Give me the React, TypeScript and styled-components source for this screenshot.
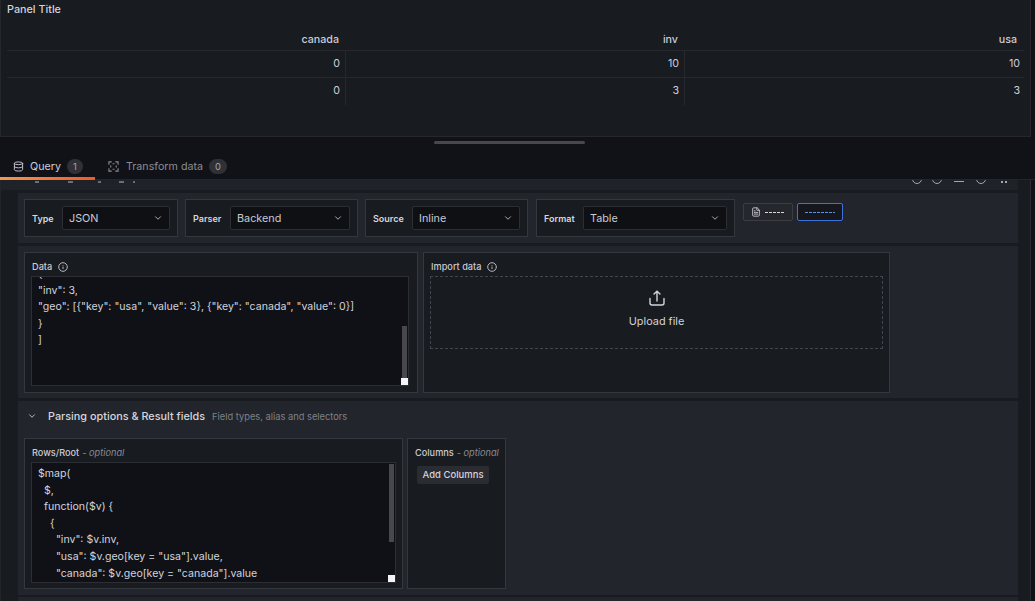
import React from 'react';
import styled, { createGlobalStyle } from 'styled-components';
import { ChevronDown, Database, FileText } from 'lucide-react';

const GlobalStyle = createGlobalStyle`
  html, body {
    margin: 0;
    height: 100%;
    background: #111217;
  }
  body {
    font-family: Inter, "Liberation Sans", sans-serif;
    color: #ccccdc;
    overflow: hidden;
  }
  * { box-sizing: border-box; }
`;

const Page = styled.div`
  width: 1035px;
  height: 601px;
  overflow: hidden;
  background: #111217;
`;

const PanelWrap = styled.div`
  width: 1031px;
  height: 137px;
  background: #181b1f;
  border: 1px solid #25272d;
  border-top: 0;
  padding: 0 6px;
`;

const PanelTitle = styled.div`
  height: 20px;
  line-height: 20px;
  font-size: 10.8px;
  font-weight: 500;
  color: #d2d3dd;
`;

const Row = styled.div<{ $head?: boolean }>`
  display: grid;
  grid-template-columns: 339px 339px 339px;
  height: ${({ $head }) => ($head ? '31px' : '27px')};
  padding-top: ${({ $head }) => ($head ? '11px' : '0')};
  border-bottom: 1px solid #26282e;
  width: 1017px;
`;

const LastRow = styled(Row)`
  border-bottom: 0;
`;

const Cell = styled.div<{ $head?: boolean; $last?: boolean }>`
  text-align: right;
  font-size: 10.7px;
  font-weight: ${({ $head }) => ($head ? 500 : 400)};
  line-height: ${({ $head }) => ($head ? '18px' : '26px')};
  padding-right: ${({ $head, $last }) => ($head ? '7px' : $last ? '4px' : '5px')};
  border-right: ${({ $head, $last }) => ($head || $last ? '0' : '1px solid #26282e')};
  color: #ccccdc;
`;

const TabBar = styled.div`
  height: 43px;
  position: relative;
  display: flex;
  align-items: flex-end;
  border-bottom: 1px solid #22252a;
`;

const Handle = styled.div`
  position: absolute;
  left: 434px;
  top: 4px;
  width: 151px;
  height: 3px;
  border-radius: 2px;
  background: #46484e;
`;

const Tab = styled.div<{ $active?: boolean; $width: number }>`
  width: ${({ $width }) => $width}px;
  height: 29px;
  padding: 3px 0 0 13px;
  display: flex;
  align-items: center;
  gap: 6px;
  font-size: 10.7px;
  color: ${({ $active }) => ($active ? '#ccccdc' : '#8a8c94')};
  position: relative;
  &::after {
    content: ${({ $active }) => ($active ? "''" : 'none')};
    position: absolute;
    left: 0;
    right: 0;
    bottom: -1px;
    height: 3px;
    background: linear-gradient(90deg, #f2994a, #f05a28);
  }
`;

const TabIcon = styled.svg`
  width: 11px;
  height: 11px;
  margin-right: 1px;
  flex: none;
`;

const Count = styled.span<{ $width: number }>`
  width: ${({ $width }) => $width}px;
  height: 15px;
  border-radius: 8px;
  background: #2f3137;
  font-size: 9.4px;
  line-height: 15px;
  text-align: center;
  color: #a3a5ad;
`;

const Editor = styled.div`
  width: 1031px;
  height: 421px;
  background: #181b1f;
  border-left: 1px solid #22252a;
  border-right: 1px solid #2a2d33;
  padding-left: 17px;
  position: relative;
`;

const ClipHeader = styled.div`
  height: 10px;
  margin-left: -17px;
  width: 1017px;
  background: #1f2228;
  position: relative;
  overflow: hidden;
`;

// only the feet of the scrolled away heading still show below the tab bar
const ClipMark = styled.span<{ $left: number; $width: number }>`
  position: absolute;
  left: ${({ $left }) => $left}px;
  top: 1px;
  width: ${({ $width }) => $width}px;
  height: 2px;
  background: #6d6f77;
`;

const ClipIcons = styled.div`
  position: absolute;
  left: 911px;
  top: -6px;
  display: flex;
  gap: 12px;
`;

const ClipIcon = styled.span`
  width: 10px;
  height: 10px;
  border: 1px solid #a4a6ae;
  border-radius: 50%;
  &:first-child {
    margin-right: -2px;
  }
  &:nth-child(3) {
    height: 8px;
    border: 0;
    border-bottom: 1px solid #a4a6ae;
    border-radius: 0;
  }
`;

const ClipDots = styled.span`
  width: 6px;
  height: 9px;
  margin-left: 3px;
  border-left: 2px dotted #a4a6ae;
  border-right: 2px dotted #a4a6ae;
`;

const Section = styled.div<{ $height: number }>`
  width: 1000px;
  height: ${({ $height }) => $height}px;
  background: #22252b;
  margin-top: 3px;
  padding: 6px;
`;

const Toolbar = styled.div`
  display: flex;
  align-items: flex-start;
`;

const Field = styled.div<{ $width: number; $mr: number }>`
  width: ${({ $width }) => $width}px;
  margin-right: ${({ $mr }) => $mr}px;
  height: 38px;
  flex: none;
  background: #181b1f;
  border: 1px solid #34373d;
  display: flex;
  align-items: center;
  justify-content: space-between;
  padding: 0 7px;
  font-size: 9px;
  font-weight: 600;
  color: #d5d6de;
`;

const Select = styled.div<{ $width: number }>`
  width: ${({ $width }) => $width}px;
  height: 24px;
  background: #0f1014;
  border: 1px solid #2c2e34;
  border-radius: 2px;
  display: flex;
  align-items: center;
  justify-content: space-between;
  padding: 0 6px;
  font-size: 10.8px;
  font-weight: 400;
  color: #c9cad4;
`;

const SmallButton = styled.div<{ $width: number; $blue?: boolean }>`
  width: ${({ $width }) => $width}px;
  height: 18px;
  margin: 4px 4px 0 0;
  flex: none;
  border-radius: 2px;
  border: 1px solid ${({ $blue }) => ($blue ? '#3d71d9' : '#3a3d43')};
  background: ${({ $blue }) => ($blue ? '#15171c' : '#25272d')};
  display: flex;
  align-items: center;
  justify-content: center;
  gap: 4px;
  color: #d5d6de;
`;

// the caption of these two buttons is squashed to an unreadable dotted line
const Squashed = styled.span<{ $width: number; $color: string }>`
  width: ${({ $width }) => $width}px;
  height: 1px;
  background: repeating-linear-gradient(
    90deg,
    ${({ $color }) => $color} 0 3px,
    transparent 3px 4px
  );
`;

const Boxes = styled.div`
  display: flex;
  align-items: flex-start;
`;

const Box = styled.div<{ $width: number; $height: number; $mr: number }>`
  width: ${({ $width }) => $width}px;
  height: ${({ $height }) => $height}px;
  margin-right: ${({ $mr }) => $mr}px;
  flex: none;
  background: #181b1f;
  border: 1px solid #34373d;
  padding: 0 6px;
`;

const BoxLabel = styled.div`
  height: 23px;
  padding: 4px 0 0 1px;
  line-height: 14px;
  display: flex;
  align-items: center;
  gap: 6px;
  font-size: 9.2px;
  font-weight: 500;
  white-space: nowrap;
  color: #c9cad4;
`;

const Optional = styled.em`
  font-weight: 400;
  color: #8a8c94;
  margin-left: -3px;
`;

const InfoIcon = styled.svg`
  width: 10px;
  height: 10px;
`;

const CodeArea = styled.div<{ $width: number; $height: number }>`
  width: ${({ $width }) => $width}px;
  height: ${({ $height }) => $height}px;
  background: #101116;
  border: 1px solid #2c2e34;
  position: relative;
  overflow: hidden;
  padding: 0 6px;
  font-size: 10.6px;
  line-height: 16.6px;
  color: #d2d3dc;
  white-space: pre;
`;

const CodeLines = styled.div<{ $top: number }>`
  margin-top: ${({ $top }) => $top}px;
`;

const Thumb = styled.div<{ $top: number; $height: number }>`
  position: absolute;
  right: 1px;
  top: ${({ $top }) => $top}px;
  width: 5px;
  height: ${({ $height }) => $height}px;
  background: #46484e;
`;

const Resizer = styled.div`
  position: absolute;
  right: 0;
  bottom: 0;
  width: 7px;
  height: 7px;
  background: #f4f4f6;
`;

const DropZone = styled.div`
  height: 73px;
  border: 1px dashed #42454c;
  display: flex;
  flex-direction: column;
  align-items: center;
  padding-top: 13px;
  gap: 8px;
  font-size: 10.9px;
  color: #d2d3dc;
`;

const UploadIcon = styled.svg`
  width: 16px;
  height: 16px;
`;

const CollapseRow = styled.div`
  height: 31px;
  padding: 0 0 13px 3px;
  display: flex;
  align-items: center;
  font-size: 10.85px;
  font-weight: 500;
  color: #d5d6de;
`;

const CollapseTitle = styled.span`
  margin-left: 11px;
`;

const CollapseHint = styled.span`
  margin-left: 7px;
  font-size: 9.3px;
  font-weight: 400;
  color: #7e8189;
`;

const AddButton = styled.div`
  width: 72px;
  height: 18px;
  margin: 4px 0 0 3px;
  background: #2a2c32;
  border-radius: 2px;
  font-size: 9.5px;
  font-weight: 500;
  line-height: 18px;
  text-align: center;
  color: #d2d3dc;
`;

const BottomStrip = styled.div`
  width: 1000px;
  height: 4px;
  margin-top: 2px;
  background: #22252b;
`;

const info = (
  <InfoIcon viewBox="0 0 10 10" fill="none" stroke="currentColor" strokeWidth="0.9">
    <circle cx="5" cy="5" r="4.3" />
    <path d="M5 4.6v2.4M5 3v.7" />
  </InfoIcon>
);

const rows = [
  ['canada', 'inv', 'usa'],
  ['0', '10', '10'],
  ['0', '3', '3'],
];

export default function App() {
  return (
    <Page>
      <GlobalStyle />
      <PanelWrap>
        <PanelTitle>Panel Title</PanelTitle>
        <Row $head>
          {rows[0].map((c, i) => (
            <Cell key={c} $head $last={i === 2}>{c}</Cell>
          ))}
        </Row>
        <Row>
          {rows[1].map((c, i) => (
            <Cell key={i} $last={i === 2}>{c}</Cell>
          ))}
        </Row>
        <LastRow>
          {rows[2].map((c, i) => (
            <Cell key={i} $last={i === 2}>{c}</Cell>
          ))}
        </LastRow>
      </PanelWrap>

      <TabBar>
        <Handle />
        <Tab $active $width={95}>
          <Database size={11} />
          Query
          <Count $width={16}>1</Count>
        </Tab>
        <Tab $width={140}>
          <TabIcon viewBox="0 0 12 12" fill="none" stroke="currentColor" strokeWidth="1.2">
            <path d="M1 4V1h3M8 1h3v3M11 8v3H8M4 11H1V8M5 3h2M9 5v2M7 9H5M3 7V5" />
          </TabIcon>
          Transform data
          <Count $width={18}>0</Count>
        </Tab>
      </TabBar>

      <Editor>
        <ClipHeader>
          <ClipMark $left={34} $width={4} />
          <ClipMark $left={67} $width={5} />
          <ClipMark $left={97} $width={3} />
          <ClipMark $left={118} $width={5} />
          <ClipMark $left={132} $width={2} />
          <ClipIcons>
            <ClipIcon />
            <ClipIcon />
            <ClipIcon />
            <ClipIcon />
            <ClipDots />
          </ClipIcons>
        </ClipHeader>

        <Section $height={50}>
          <Toolbar>
            <Field $width={154} $mr={7}>
              Type
              <Select $width={108}>
                JSON
                <ChevronDown size={10} />
              </Select>
            </Field>
            <Field $width={173} $mr={7}>
              Parser
              <Select $width={120}>
                Backend
                <ChevronDown size={10} />
              </Select>
            </Field>
            <Field $width={163} $mr={8}>
              Source
              <Select $width={108}>
                Inline
                <ChevronDown size={10} />
              </Select>
            </Field>
            <Field $width={199} $mr={8}>
              Format
              <Select $width={144}>
                Table
                <ChevronDown size={10} />
              </Select>
            </Field>
            <SmallButton $width={50}>
              <FileText size={10} />
              <Squashed $width={20} $color="#d5d6de" />
            </SmallButton>
            <SmallButton $width={46} $blue>
              <Squashed $width={30} $color="#5b92e5" />
            </SmallButton>
          </Toolbar>
        </Section>

        <Section $height={152}>
          <Boxes>
            <Box $width={394} $height={141} $mr={5}>
              <BoxLabel>Data {info}</BoxLabel>
              <CodeArea $width={378} $height={110}>
                <CodeLines $top={-11}>
                  {`{\n"inv": 3,\n"geo": [{"key": "usa", "value": 3}, {"key": "canada", "value": 0}]\n}\n]`}
                </CodeLines>
                <Thumb $top={49} $height={53} />
                <Resizer />
              </CodeArea>
            </Box>
            <Box $width={467} $height={141} $mr={0}>
              <BoxLabel>Import data {info}</BoxLabel>
              <DropZone>
                <UploadIcon viewBox="0 0 16 16" fill="none" stroke="currentColor" strokeWidth="1.4" strokeLinecap="round">
                  <path d="M1 8.5V13a2 2 0 0 0 2 2h10a2 2 0 0 0 2-2V8.5" />
                  <path d="M8 11V1.2M5 4l3-2.8L11 4" />
                </UploadIcon>
                Upload file
              </DropZone>
            </Box>
          </Boxes>
        </Section>

        <Section $height={194}>
          <CollapseRow>
            <ChevronDown size={10} />
            <CollapseTitle>Parsing options &amp; Result fields</CollapseTitle>
            <CollapseHint>Field types, alias and selectors</CollapseHint>
          </CollapseRow>
          <Boxes>
            <Box $width={379} $height={151} $mr={4}>
              <BoxLabel>
                Rows/Root <Optional>- optional</Optional>
              </BoxLabel>
              <CodeArea $width={365} $height={121}>
                <CodeLines $top={3}>
                  {`$map(\n  $,\n  function($v) {\n    {\n      "inv": $v.inv,\n      "usa": $v.geo[key = "usa"].value,\n      "canada": $v.geo[key = "canada"].value`}
                </CodeLines>
                <Thumb $top={1} $height={78} />
                <Resizer />
              </CodeArea>
            </Box>
            <Box $width={99} $height={151} $mr={0}>
              <BoxLabel>
                Columns <Optional>- optional</Optional>
              </BoxLabel>
              <AddButton>Add Columns</AddButton>
            </Box>
          </Boxes>
        </Section>
        <BottomStrip />
      </Editor>
    </Page>
  );
}
